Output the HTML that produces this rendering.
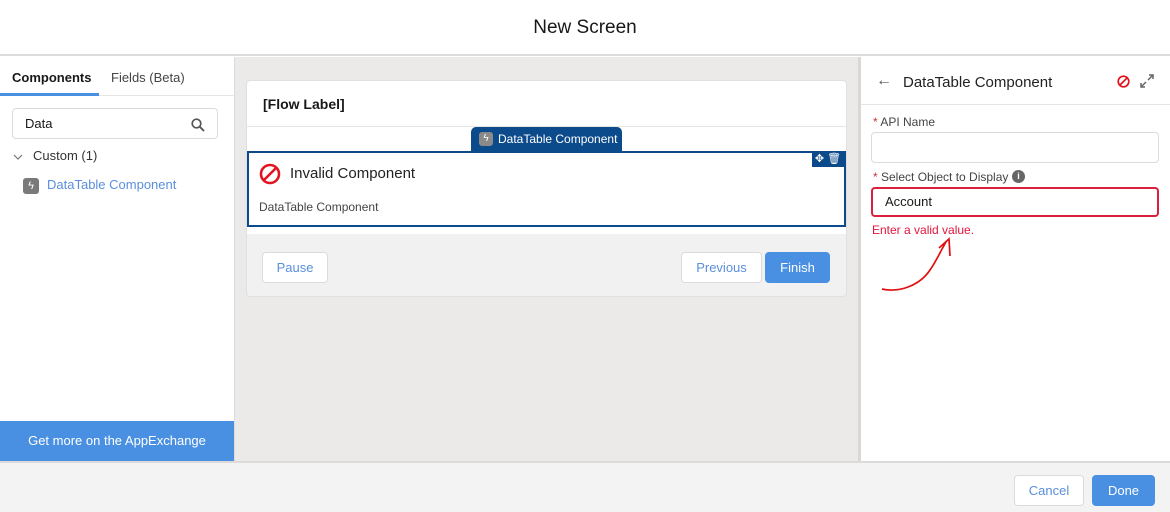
<!DOCTYPE html>
<html><head><style>
*{box-sizing:border-box;margin:0;padding:0}
body{width:1170px;height:512px;position:relative;font-family:"Liberation Sans",sans-serif;background:#fff;overflow:hidden;color:#181818}
.a{position:absolute}
.btn{position:absolute;border:1px solid #dddbda;border-radius:4px;background:#fff;color:#5a8fdc;font-size:13px;display:flex;align-items:center;justify-content:center}
.blue{background:#4a90e2;border-color:#4a90e2;color:#fff}
</style></head><body>
<div class="a" style="left:0;top:0;width:1170px;height:56px;border-bottom:2px solid #dddbda;text-align:center;font-size:19px;line-height:56px;color:#181818">New Screen</div>
<!-- left -->
<div class="a" style="left:0;top:57px;width:234px;height:404px;background:#fff">
 <div class="a" style="left:12px;top:13px;font-size:13px;font-weight:bold">Components</div>
 <div class="a" style="left:111px;top:13px;font-size:13px;color:#444">Fields (Beta)</div>
 <div class="a" style="left:0;top:38px;width:234px;border-bottom:1px solid #e5e5e5"></div>
 <div class="a" style="left:0;top:36px;width:99px;height:3px;background:#4a90e2"></div>
 <div class="a" style="left:12px;top:51px;width:206px;height:31px;border:1px solid #dddbda;border-radius:4px;font-size:13px;line-height:29px;padding-left:12px">Data</div>
 <svg class="a" style="left:191px;top:61px" width="14" height="14" viewBox="0 0 14 14"><circle cx="5.5" cy="5.5" r="4.3" fill="none" stroke="#555" stroke-width="1.7"/><path d="M8.7 8.7L13 13" stroke="#555" stroke-width="1.9"/></svg>
 <svg class="a" style="left:13px;top:96px" width="10" height="8"><path d="M1 2l4 4 4-4" fill="none" stroke="#777" stroke-width="1.2"/></svg>
 <div class="a" style="left:33px;top:91px;font-size:13px;color:#333">Custom (1)</div>
 <div class="a" style="left:23px;top:121px;width:16px;height:16px;background:#7a7a7a;border-radius:3px;color:#fff;font-size:11px;text-align:center;line-height:16px">ϟ</div>
 <div class="a" style="left:47px;top:120px;font-size:13px;color:#5a8fdc">DataTable Component</div>
 <div class="a" style="left:0;top:364px;width:234px;height:40px;background:#4a90e2;color:#fff;font-size:13px;text-align:center;line-height:40px">Get more on the AppExchange</div>
</div>
<!-- middle -->
<div class="a" style="left:234px;top:57px;width:624px;height:404px;background:#ebeae8;border-left:1px solid #dddbda"></div>
<div class="a" style="left:246px;top:80px;width:601px;height:217px;background:#f1f1f1;border:1px solid #e0e0e0;border-radius:4px"></div>
<div class="a" style="left:247px;top:81px;width:599px;height:46px;background:#fff;border-bottom:1px solid #e5e5e5;border-radius:4px 4px 0 0;font-size:14px;font-weight:bold;padding:15px 16px">[Flow Label]</div>
<div class="a" style="left:247px;top:127px;width:599px;height:107px;background:#fff"></div>
<div class="a" style="left:471px;top:127px;width:151px;height:25px;background:#0b4a8b;border-radius:5px 5px 0 0;color:#fff;font-size:12px;line-height:25px;padding-left:27px">DataTable Component</div>
<div class="a" style="left:479px;top:132px;width:14px;height:14px;background:#8a8a8a;border-radius:3px;color:#fff;font-size:10px;text-align:center;line-height:14px">ϟ</div>
<div class="a" style="left:247px;top:151px;width:599px;height:76px;border:2px solid #0b4a8b;background:#fff"></div>
<div class="a" style="left:812px;top:152px;width:32px;height:15px;background:#0b4a8b;color:#fff;font-size:11px;line-height:15px;text-align:center">✥ 🗑</div>
<svg class="a" style="left:259px;top:163px" width="22" height="22" viewBox="0 0 22 22"><circle cx="11" cy="11" r="9" fill="none" stroke="#e3141f" stroke-width="2.6"/><path d="M5 17L17 5" stroke="#e3141f" stroke-width="2.6"/></svg>
<div class="a" style="left:290px;top:165px;font-size:15px;color:#222">Invalid Component</div>
<div class="a" style="left:259px;top:200px;font-size:12px;color:#444">DataTable Component</div>
<div class="btn" style="left:262px;top:252px;width:66px;height:31px">Pause</div>
<div class="btn" style="left:681px;top:252px;width:81px;height:31px">Previous</div>
<div class="btn blue" style="left:765px;top:252px;width:65px;height:31px">Finish</div>
<!-- right -->
<div class="a" style="left:858px;top:57px;width:3px;height:404px;background:#d8d8d8"></div>
<div class="a" style="left:876px;top:72px;font-size:16px;color:#555">←</div>
<div class="a" style="left:903px;top:74px;font-size:15px;color:#222">DataTable Component</div>
<svg class="a" style="left:1117px;top:75px" width="13" height="13" viewBox="0 0 13 13"><circle cx="6.5" cy="6.5" r="5.3" fill="none" stroke="#e3141f" stroke-width="1.7"/><path d="M3 10L10 3" stroke="#e3141f" stroke-width="1.7"/></svg>
<svg class="a" style="left:1140px;top:74px" width="14" height="14" viewBox="0 0 14 14"><path d="M8 6L13 1M9 1h4v4M6 8L1 13M1 9v4h4" fill="none" stroke="#666" stroke-width="1.5"/></svg>
<div class="a" style="left:861px;top:104px;width:309px;border-bottom:1px solid #e5e5e5"></div>
<div class="a" style="left:873px;top:115px;font-size:12px;color:#444"><span style="color:#c23934">*</span> API Name</div>
<div class="a" style="left:871px;top:132px;width:288px;height:31px;border:1px solid #dddbda;border-radius:4px"></div>
<div class="a" style="left:873px;top:170px;font-size:12px;color:#444"><span style="color:#c23934">*</span> Select Object to Display</div>
<div class="a" style="left:1012px;top:170px;width:13px;height:13px;border-radius:50%;background:#666;color:#fff;font-size:9px;font-weight:bold;text-align:center;line-height:13px">i</div>
<div class="a" style="left:871px;top:187px;width:288px;height:30px;border:2px solid #dc1f3c;border-radius:4px;font-size:13px;line-height:26px;padding-left:12px">Account</div>
<div class="a" style="left:872px;top:223px;font-size:12px;color:#e3143c">Enter a valid value.</div>
<svg class="a" style="left:880px;top:230px" width="80" height="65"><path d="M2 59C20 63 40 55 50 40C57 30 60 22 66 12M59 18L69 9L70 26" fill="none" stroke="#e01010" stroke-width="1.7"/></svg>
<!-- footer -->
<div class="a" style="left:0;top:461px;width:1170px;height:51px;background:#f3f3f3;border-top:2px solid #dddbda"></div>
<div class="btn" style="left:1014px;top:475px;width:70px;height:31px">Cancel</div>
<div class="btn blue" style="left:1092px;top:475px;width:63px;height:31px">Done</div>
</body></html>
